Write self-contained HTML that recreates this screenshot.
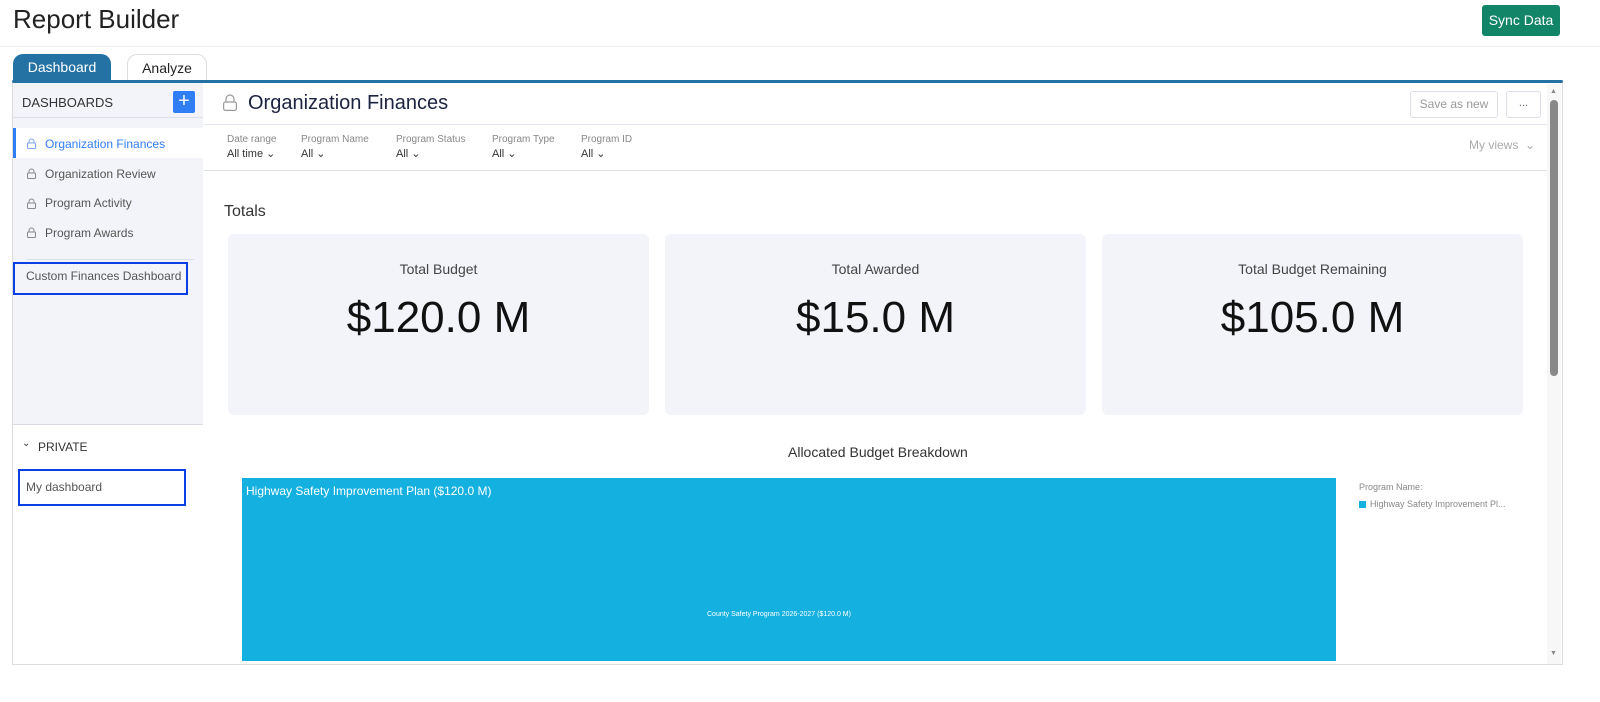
<!DOCTYPE html>
<html><head><meta charset="utf-8"><style>
*{box-sizing:border-box;margin:0;padding:0}
body{width:1600px;height:702px;background:#fff;font-family:"Liberation Sans",sans-serif;position:relative;overflow:hidden;color:#222}
.a{position:absolute}
.lock{position:absolute;width:9px;height:11px}
</style></head><body>
<div class="a" style="left:13px;top:4px;font-size:26px;color:#222">Report Builder</div>
<div class="a" style="left:1482px;top:5px;width:78px;height:31px;background:#128467;border-radius:3px;color:#fff;font-size:14px;line-height:31px;text-align:center">Sync Data</div>
<div class="a" style="left:0;top:46px;width:1600px;height:1px;background:#eee"></div>
<div class="a" style="left:13px;top:54px;width:98px;height:28px;background:#2472a4;border-radius:10px 10px 0 0;color:#fff;font-size:14px;text-align:center;line-height:26px">Dashboard</div>
<div class="a" style="left:127px;top:54px;width:80px;height:28px;border:1px solid #ddd;border-bottom:none;border-radius:10px 10px 0 0;font-size:14px;text-align:center;line-height:26px">Analyze</div>
<div class="a" style="left:12px;top:80px;width:1551px;height:3px;background:#2472a4;border-radius:2px"></div>
<div class="a" style="left:12px;top:83px;width:1551px;height:582px;border:1px solid #ddd;border-top:none"></div>
<!-- sidebar -->
<div class="a" style="left:13px;top:83px;width:190px;height:342px;background:#f3f4f9"></div>
<div class="a" style="left:13px;top:424px;width:190px;height:1px;background:#d8dbe6"></div>
<div class="a" style="left:22px;top:95px;font-size:13px;color:#333">DASHBOARDS</div>
<div class="a" style="left:173px;top:91px;width:22px;height:22px;background:#2f7ef5;border-radius:2px;color:#fff;font-size:20px;line-height:21px;text-align:center">+</div>
<div class="a" style="left:13px;top:117px;width:190px;height:1px;background:#dde0ea"></div>
<div class="a" style="left:13px;top:128px;width:190px;height:30px;background:#fff"></div>
<div class="a" style="left:13px;top:128px;width:3px;height:30px;background:#2f7ef5"></div>
<svg class="lock" style="left:27px;top:138px" viewBox="0 0 9 11"><path d="M2 5V3.5a2.5 2.5 0 0 1 5 0V5" fill="none" stroke="#7aa6f5" stroke-width="1"/><rect x=".5" y="5" width="8" height="5.5" rx="1" fill="none" stroke="#7aa6f5"/></svg>
<div class="a" style="left:45px;top:137px;font-size:12px;color:#2f7ef5">Organization Finances</div>
<svg class="lock" style="left:27px;top:168px" viewBox="0 0 9 11"><path d="M2 5V3.5a2.5 2.5 0 0 1 5 0V5" fill="none" stroke="#888"/><rect x=".5" y="5" width="8" height="5.5" rx="1" fill="none" stroke="#888"/></svg>
<div class="a" style="left:45px;top:167px;font-size:12px;color:#555">Organization Review</div>
<svg class="lock" style="left:27px;top:198px" viewBox="0 0 9 11"><path d="M2 5V3.5a2.5 2.5 0 0 1 5 0V5" fill="none" stroke="#888"/><rect x=".5" y="5" width="8" height="5.5" rx="1" fill="none" stroke="#888"/></svg>
<div class="a" style="left:45px;top:196px;font-size:12px;color:#555">Program Activity</div>
<svg class="lock" style="left:27px;top:227px" viewBox="0 0 9 11"><path d="M2 5V3.5a2.5 2.5 0 0 1 5 0V5" fill="none" stroke="#888"/><rect x=".5" y="5" width="8" height="5.5" rx="1" fill="none" stroke="#888"/></svg>
<div class="a" style="left:45px;top:226px;font-size:12px;color:#555">Program Awards</div>
<div class="a" style="left:26px;top:259px;width:168px;height:1px;background:#dde0ea"></div>
<div class="a" style="left:13px;top:262px;width:175px;height:33px;border:2px solid #0a3fe6"></div>
<div class="a" style="left:26px;top:269px;font-size:12px;color:#555">Custom Finances Dashboard</div>
<div class="a" style="left:22px;top:438px;font-size:10px;color:#333">⌄</div>
<div class="a" style="left:38px;top:440px;font-size:12px;color:#333">PRIVATE</div>
<div class="a" style="left:18px;top:469px;width:168px;height:37px;border:2px solid #0a3fe6"></div>
<div class="a" style="left:26px;top:480px;font-size:12px;color:#555">My dashboard</div>
<!-- main header -->
<svg class="a" style="left:223px;top:94px" width="14" height="17" viewBox="0 0 14 17"><path d="M3 8V5a4 4 0 0 1 8 0v3" fill="none" stroke="#999" stroke-width="1.2"/><rect x=".6" y="8" width="12.8" height="8.4" rx="2" fill="none" stroke="#999" stroke-width="1.2"/></svg>
<div class="a" style="left:248px;top:92px;font-size:20px;color:#1c2340">Organization Finances</div>
<div class="a" style="left:1410px;top:91px;width:88px;height:27px;border:1px solid #dde0e8;border-radius:3px;font-size:12px;color:#999;text-align:center;line-height:25px">Save as new</div>
<div class="a" style="left:1506px;top:91px;width:35px;height:27px;border:1px solid #dde0e8;border-radius:3px;font-size:11px;color:#666;text-align:center;line-height:22px">...</div>
<div class="a" style="left:204px;top:124px;width:1343px;height:1px;background:#e6e8ef"></div>
<div class="a" style="left:204px;top:170px;width:1343px;height:1px;background:#dde0ea"></div>
<div class="a" style="left:227px;top:134px;font-size:10px;color:#888">Date range</div><div class="a" style="left:227px;top:147px;font-size:11px;color:#333">All time ⌄</div>
<div class="a" style="left:301px;top:134px;font-size:10px;color:#888">Program Name</div><div class="a" style="left:301px;top:147px;font-size:11px;color:#333">All ⌄</div>
<div class="a" style="left:396px;top:134px;font-size:10px;color:#888">Program Status</div><div class="a" style="left:396px;top:147px;font-size:11px;color:#333">All ⌄</div>
<div class="a" style="left:492px;top:134px;font-size:10px;color:#888">Program Type</div><div class="a" style="left:492px;top:147px;font-size:11px;color:#333">All ⌄</div>
<div class="a" style="left:581px;top:134px;font-size:10px;color:#888">Program ID</div><div class="a" style="left:581px;top:147px;font-size:11px;color:#333">All ⌄</div>
<div class="a" style="left:1469px;top:138px;font-size:12px;color:#aaa">My views &nbsp;⌄</div>
<!-- scrollbar -->
<div class="a" style="left:1547px;top:84px;width:14px;height:580px;background:#f7f7f7"></div>
<div class="a" style="left:1550px;top:100px;width:8px;height:276px;background:#888;border-radius:4px"></div>
<div class="a" style="left:1550px;top:88px;font-size:7px;color:#888">▲</div>
<div class="a" style="left:1550px;top:650px;font-size:7px;color:#888">▼</div>
<div class="a" style="left:224px;top:203px;font-size:16px;color:#333">Totals</div>
<div class="a" style="left:228px;top:234px;width:421px;height:181px;background:#f3f4f9;border-radius:6px;text-align:center"><div style="margin-top:27px;font-size:14px;color:#444">Total Budget</div><div style="margin-top:16px;font-size:44px;color:#111">$120.0 M</div></div>
<div class="a" style="left:665px;top:234px;width:421px;height:181px;background:#f3f4f9;border-radius:6px;text-align:center"><div style="margin-top:27px;font-size:14px;color:#444">Total Awarded</div><div style="margin-top:16px;font-size:44px;color:#111">$15.0 M</div></div>
<div class="a" style="left:1102px;top:234px;width:421px;height:181px;background:#f3f4f9;border-radius:6px;text-align:center"><div style="margin-top:27px;font-size:14px;color:#444">Total Budget Remaining</div><div style="margin-top:16px;font-size:44px;color:#111">$105.0 M</div></div>
<div class="a" style="left:788px;top:444px;font-size:14px;color:#333">Allocated Budget Breakdown</div>
<div class="a" style="left:242px;top:478px;width:1094px;height:183px;background:#14b0e0"></div>
<div class="a" style="left:246px;top:484px;font-size:12px;color:#fff">Highway Safety Improvement Plan ($120.0 M)</div>
<div class="a" style="left:707px;top:611px;font-size:7px;color:#fff">County Safety Program 2026-2027 ($120.0 M)</div>
<div class="a" style="left:1359px;top:482px;font-size:9px;color:#888">Program Name:</div>
<div class="a" style="left:1359px;top:501px;width:7px;height:7px;background:#14b0e0"></div>
<div class="a" style="left:1370px;top:499px;font-size:9px;color:#888">Highway Safety Improvement Pl...</div>
</body></html>
